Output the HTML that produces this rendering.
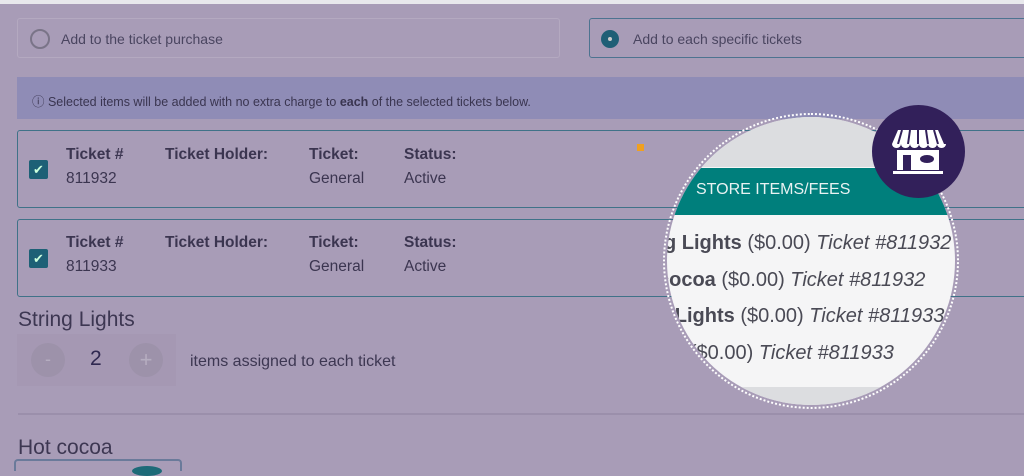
<!DOCTYPE html>
<html><head><style>
body{margin:0;width:1024px;height:471px;overflow:hidden;background:#a89cb7;font-family:"Liberation Sans",sans-serif;position:relative}
.a{position:absolute}
.top{left:0;top:0;width:1024px;height:4px;background:#e8e8ec}
.opt{border:1px solid #b4a9c0;border-radius:3px;height:40px;box-sizing:border-box;font-size:14px;color:#4a4560}
.rad{width:16px;height:16px;border-radius:50%;border:2px solid #7a7488;box-sizing:border-box}
.tk{border:1.5px solid #3f7288;border-radius:3px;box-sizing:border-box;width:1030px;height:78px;left:17px}
.cb{width:19px;height:19px;background:#1d6076;border-radius:2px;color:#cfd;font-size:13px;text-align:center;line-height:19px}
.h{font-weight:bold;font-size:15.5px;color:#3b3550}
.v{font-size:15.5px;color:#3b3550}
</style></head><body>
<div class="a top"></div>
<div class="a opt" style="left:17px;top:18px;width:543px"><div class="a rad" style="left:12px;top:10px;width:20px;height:20px"></div><div class="a" style="left:43px;top:12px">Add to the ticket purchase</div></div>
<div class="a opt" style="left:589px;top:18px;width:450px;border-color:#4d7390"><div class="a" style="left:11px;top:11px;width:18px;height:18px;border-radius:50%;background:#1f5f76"><div class="a" style="left:7px;top:7px;width:4px;height:4px;border-radius:50%;background:#ccc"></div></div><div class="a" style="left:43px;top:12px">Add to each specific tickets</div></div>
<div class="a" style="left:17px;top:77px;width:1010px;height:42px;background:#8f8cb6"></div>
<div class="a" style="left:32px;top:91px;font-size:12.5px;color:#3a3550">ⓘ Selected items will be added with no extra charge to <b>each</b> of the selected tickets below.</div>
<div class="a tk" style="top:130px"></div>
<div class="a tk" style="top:219px"></div>
<div class="a cb" style="left:29px;top:160px">✔</div>
<div class="a cb" style="left:29px;top:249px">✔</div>
<div class="a h" style="left:66px;top:146px">Ticket #</div><div class="a v" style="left:66px;top:170px">811932</div>
<div class="a h" style="left:165px;top:146px">Ticket Holder:</div>
<div class="a h" style="left:309px;top:146px">Ticket:</div><div class="a v" style="left:309px;top:170px">General</div>
<div class="a h" style="left:404px;top:146px">Status:</div><div class="a v" style="left:404px;top:170px">Active</div>
<div class="a h" style="left:66px;top:234px">Ticket #</div><div class="a v" style="left:66px;top:258px">811933</div>
<div class="a h" style="left:165px;top:234px">Ticket Holder:</div>
<div class="a h" style="left:309px;top:234px">Ticket:</div><div class="a v" style="left:309px;top:258px">General</div>
<div class="a h" style="left:404px;top:234px">Status:</div><div class="a v" style="left:404px;top:258px">Active</div>
<div class="a" style="left:637px;top:144px;width:7px;height:7px;background:#f0a020"></div>
<div class="a" style="left:18px;top:308px;font-size:21px;color:#3d3752">String Lights</div>
<div class="a" style="left:17px;top:334px;width:159px;height:52px;background:#a598b3"></div>
<div class="a" style="left:31px;top:343px;width:34px;height:34px;border-radius:50%;background:#9d92aa;color:#b5adc0;text-align:center;line-height:33px;font-size:18px">-</div>
<div class="a" style="left:129px;top:343px;width:34px;height:34px;border-radius:50%;background:#9d92aa;color:#b5adc0;text-align:center;line-height:33px;font-size:22px">+</div>
<div class="a" style="left:90px;top:347px;font-size:21px;color:#2f2850">2</div>
<div class="a" style="left:190px;top:353px;font-size:16px;color:#3d3752">items assigned to each ticket</div>
<div class="a" style="left:18px;top:413px;width:1010px;height:2px;background:#9b8fab"></div>
<div class="a" style="left:18px;top:436px;font-size:21px;color:#3d3752">Hot cocoa</div>
<div class="a" style="left:14px;top:459px;width:164px;height:10px;border:2px solid #6a7a9a;border-bottom:none;border-radius:4px 4px 0 0"></div>
<div class="a" style="left:132px;top:466px;width:30px;height:10px;border-radius:50%;background:#1d6a78"></div>
<!-- magnifier -->
<div class="a" style="left:663px;top:113px;width:296px;height:296px;border-radius:50%;border:2px dotted #fff;box-sizing:border-box"></div>
<div class="a" style="left:667px;top:117px;width:288px;height:288px;border-radius:50%;overflow:hidden;background:#f5f5f6">
<div class="a" style="left:0;top:0;width:288px;height:50px;background:#dcdde0"></div>
<div class="a" style="left:0;top:51px;width:288px;height:47px;background:#007f7c"></div>
<div class="a" style="left:29px;top:64px;color:#e8f2f2;font-size:16px">STORE ITEMS/FEES</div>
<div class="a" style="left:0;top:270px;width:288px;height:20px;background:#dcdde0"></div>
<div style="position:absolute;left:-3px;top:108px;font-size:20px;color:#4a4a55;white-space:nowrap;line-height:36.5px">
<div><b>g Lights</b> ($0.00) <i>Ticket #811932</i></div>
<div style="margin-left:-6px"><b>cocoa</b> ($0.00) <i>Ticket #811932</i></div>
<div style="margin-left:-7px"><b>g Lights</b> ($0.00) <i>Ticket #811933</i></div>
<div style="margin-left:-3px"><b>oa</b> ($0.00) <i>Ticket #811933</i></div>
</div></div>
<div class="a" style="left:872px;top:105px;width:93px;height:93px;border-radius:50%;background:#32205a"></div>
<svg class="a" style="left:890px;top:122px" width="56" height="60" viewBox="0 0 56 60">
<path d="M8 8h40l6 14H2z" fill="#fff"/>
<path d="M12 8l-4 14M20 8l-2 14M28 8v14M36 8l2 14M44 8l4 14" stroke="#32205a" stroke-width="2"/>
<path d="M2 22a4.5 4 0 0 0 9 0a4.5 4 0 0 0 9 0a4.5 4 0 0 0 9 0a4.5 4 0 0 0 9 0a4.5 4 0 0 0 9 0a4.5 4 0 0 0 9 0z" fill="#fff"/>
<rect x="7" y="28" width="42" height="20" fill="#fff"/>
<rect x="13" y="33" width="8" height="15" fill="#32205a"/>
<ellipse cx="37" cy="37" rx="7" ry="4" fill="#32205a"/>
<rect x="3" y="49" width="50" height="3" fill="#fff"/>
</svg>
</body></html>
